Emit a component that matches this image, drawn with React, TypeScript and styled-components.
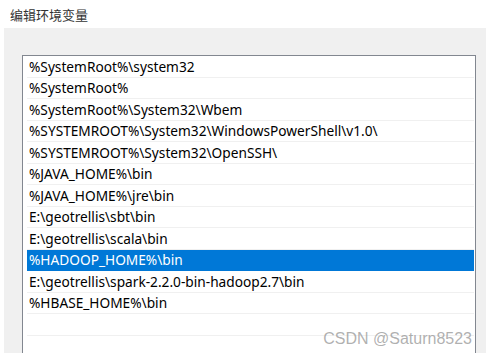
import styled, { createGlobalStyle } from "styled-components";

const GlobalStyle = createGlobalStyle`
  html, body {
    margin: 0;
    padding: 0;
    background: #ffffff;
  }
  body {
    width: 486px;
    height: 353px;
    overflow: hidden;
  }
`;

const paths = [
  "%SystemRoot%\\system32",
  "%SystemRoot%",
  "%SystemRoot%\\System32\\Wbem",
  "%SYSTEMROOT%\\System32\\WindowsPowerShell\\v1.0\\",
  "%SYSTEMROOT%\\System32\\OpenSSH\\",
  "%JAVA_HOME%\\bin",
  "%JAVA_HOME%\\jre\\bin",
  "E:\\geotrellis\\sbt\\bin",
  "E:\\geotrellis\\scala\\bin",
  "%HADOOP_HOME%\\bin",
  "E:\\geotrellis\\spark-2.2.0-bin-hadoop2.7\\bin",
  "%HBASE_HOME%\\bin",
  "",
  "",
  "",
];

const selectedIndex = 9;

function App() {
  return (
    <>
      <GlobalStyle />
      <Page>
        <Title>编辑环境变量</Title>
        <Panel>
          <ListBox>
            {paths.map((p, i) => (
              <Row key={i} $selected={i === selectedIndex}>
                {p}
              </Row>
            ))}
            <Watermark>CSDN @Saturn8523</Watermark>
          </ListBox>
        </Panel>
      </Page>
    </>
  );
}

export default App;

const Page = styled.div`
  width: 486px;
  height: 353px;
  display: flex;
  flex-direction: column;
  overflow: hidden;
  background: #ffffff;
`;

const Title = styled.div`
  flex: none;
  height: 28px;
  padding: 0 0 0 10px;
  box-sizing: border-box;
  display: flex;
  align-items: center;
  font-family: "Noto Sans CJK SC", sans-serif;
  font-size: 13px;
  color: #333333;
`;

const Panel = styled.div`
  flex: 1;
  min-height: 0;
  margin-left: 4px;
  background: #f0f0f0;
  padding: 27px 10px 0 18px;
  display: flex;
  flex-direction: column;
`;

const ListBox = styled.div`
  position: relative;
  flex: 1;
  min-height: 0;
  overflow: hidden;
  background: #ffffff;
  border: 1px solid #828790;
  border-bottom: none;
  padding: 0 1px 0 4px;
  display: flex;
  flex-direction: column;
`;

const Row = styled.div<{ $selected?: boolean }>`
  flex: none;
  height: 21.5px;
  box-sizing: border-box;
  padding-left: 2px;
  display: flex;
  align-items: center;
  border-bottom: 1px solid ${(p) => (p.$selected ? "#0078d7" : "#f0f0f0")};
  background: ${(p) => (p.$selected ? "#0078d7" : "transparent")};
  color: ${(p) => (p.$selected ? "#ffffff" : "#000000")};
  font-family: "Noto Sans", "Noto Sans CJK SC", sans-serif;
  font-size: 13.7px;
  white-space: nowrap;
`;

const Watermark = styled.span`
  position: absolute;
  right: 3px;
  bottom: 5px;
  font-family: "Liberation Sans", Arial, sans-serif;
  font-size: 16px;
  color: rgba(150, 150, 150, 0.75);
`;
